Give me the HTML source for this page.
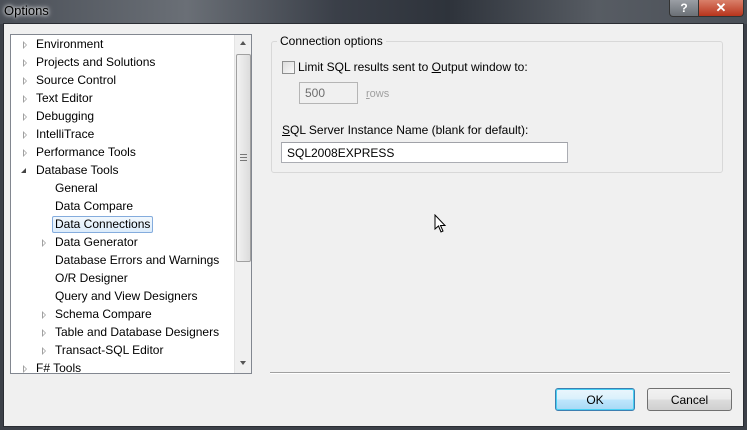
<!DOCTYPE html>
<html><head><style>
body{margin:0;width:747px;height:430px;overflow:hidden;background:#3c4048;font-family:"Liberation Sans",sans-serif;font-size:12px;color:#000;position:relative}
.title{position:absolute;left:0;top:0;width:747px;height:24px;background:linear-gradient(90deg,#4b5058 0%,#6a6f76 25%,#3a3f48 45%,#2e333b 60%,#575c63 80%,#4a4f57 100%)}
.title span{position:absolute;left:4px;top:3px;color:#000;font-size:13px;text-shadow:0 0 6px #fff,0 0 3px #fff}
.btnq{position:absolute;left:669px;top:0;width:28px;height:16px;border:1px solid #333;border-top:none;border-radius:0 0 0 4px;background:linear-gradient(#9a9ea4,#6b7076);color:#fff;font-weight:bold;text-align:center;font-size:12px;line-height:16px}
.btnx{position:absolute;left:698px;top:0;width:44px;height:16px;border:1px solid #333;border-top:none;border-radius:0 0 4px 0;background:linear-gradient(#d9806a,#b8341c);color:#fff;font-weight:bold;text-align:center;font-size:13px;line-height:16px}
.client{position:absolute;left:3px;top:23px;width:739px;height:402px;background:#f0f0f0;border:1px solid #2a2d33}
.tree{position:absolute;left:10px;top:34px;width:240px;height:338px;background:#fff;border:1px solid #828790;overflow:hidden}
.it{position:absolute;height:18px;line-height:18px;white-space:nowrap}
.ar{position:absolute;width:0;height:0;border-left:4px solid #a0a0a0;border-top:4px solid transparent;border-bottom:4px solid transparent;top:6px}
.ar:after{content:"";position:absolute;left:-3px;top:-2px;border-left:2px solid #fff;border-top:2px solid transparent;border-bottom:2px solid transparent}
.ex{position:absolute;top:6px;width:0;height:0;border-right:5px solid #444;border-top:5px solid transparent}
.sel{background:linear-gradient(#f2f8fd,#dcecfb);border:1px solid #84acdd;border-radius:2px;padding:0 2px;margin-left:-3px;line-height:15px;height:15px}
.sb{position:absolute;left:223px;top:0;width:17px;height:338px;background:#f0f0f0;border-left:1px solid #e4e4e4}
.thumb{position:absolute;left:1px;top:19px;width:13px;height:206px;border:1px solid #a0a0a0;border-radius:2px;background:linear-gradient(90deg,#f2f2f2,#dcdcdc)}
.group{position:absolute;left:271px;top:41px;width:450px;height:130px;border:1px solid #d8d8d8;border-radius:3px}
.glabel{position:absolute;left:277px;top:34px;background:#f0f0f0;padding:0 3px;font-size:12px}
.cb{position:absolute;left:282px;top:61px;width:11px;height:11px;border:1px solid #8e8f8f;background:linear-gradient(135deg,#dcdcdc,#fafafa)}
.inp{position:absolute;background:#fff;border:1px solid #abadb3;border-top-color:#a0a2a8;height:21px;line-height:21px;padding-left:5px;box-sizing:border-box}
.sep{position:absolute;left:270px;top:372px;width:460px;height:1px;background:#a0a0a0;border-bottom:1px solid #fff}
.btn{position:absolute;top:388px;height:23px;border:1px solid #707070;border-radius:3px;background:linear-gradient(#f2f2f2 0%,#ebebeb 50%,#dddddd 51%,#cfcfcf 100%);text-align:center;line-height:22px;box-sizing:border-box}
.ok{border-color:#3c7fb1;background:linear-gradient(#eaf6fd 0%,#d9f0fc 50%,#bee6fd 51%,#a7d9f5 100%);box-shadow:inset 0 0 0 1px #48d0f3}
u{text-decoration:underline}
</style></head><body>
<div class="title"><span>Options</span></div>
<div class="btnq">?</div><div class="btnx">✕</div>
<div class="client"></div>
<div class="tree">
 <div class="ar" style="left:12px;top:6px"></div><div class="it" style="left:25px;top:0">Environment</div>
 <div class="ar" style="left:12px;top:24px"></div><div class="it" style="left:25px;top:18px">Projects and Solutions</div>
 <div class="ar" style="left:12px;top:42px"></div><div class="it" style="left:25px;top:36px">Source Control</div>
 <div class="ar" style="left:12px;top:60px"></div><div class="it" style="left:25px;top:54px">Text Editor</div>
 <div class="ar" style="left:12px;top:78px"></div><div class="it" style="left:25px;top:72px">Debugging</div>
 <div class="ar" style="left:12px;top:96px"></div><div class="it" style="left:25px;top:90px">IntelliTrace</div>
 <div class="ar" style="left:12px;top:114px"></div><div class="it" style="left:25px;top:108px">Performance Tools</div>
 <div class="ex" style="left:10px;top:133px"></div><div class="it" style="left:25px;top:126px">Database Tools</div>
 <div class="it" style="left:44px;top:144px">General</div>
 <div class="it" style="left:44px;top:162px">Data Compare</div>
 <div class="it" style="left:44px;top:180px"><span class="sel" style="display:inline-block">Data Connections</span></div>
 <div class="ar" style="left:31px;top:204px"></div><div class="it" style="left:44px;top:198px">Data Generator</div>
 <div class="it" style="left:44px;top:216px">Database Errors and Warnings</div>
 <div class="it" style="left:44px;top:234px">O/R Designer</div>
 <div class="it" style="left:44px;top:252px">Query and View Designers</div>
 <div class="ar" style="left:31px;top:276px"></div><div class="it" style="left:44px;top:270px">Schema Compare</div>
 <div class="ar" style="left:31px;top:294px"></div><div class="it" style="left:44px;top:288px">Table and Database Designers</div>
 <div class="ar" style="left:31px;top:312px"></div><div class="it" style="left:44px;top:306px">Transact-SQL Editor</div>
 <div class="ar" style="left:12px;top:330px"></div><div class="it" style="left:25px;top:324px">F# Tools</div>
 <div class="sb"><div style="position:absolute;left:5px;top:6px;border-bottom:4px solid #555;border-left:3px solid transparent;border-right:3px solid transparent"></div>
 <div class="thumb"><div style="position:absolute;left:3px;top:99px;width:7px;height:5px;border-top:1px solid #777;border-bottom:1px solid #777"><div style="margin-top:2px;height:1px;background:#777"></div></div></div>
 <div style="position:absolute;left:5px;top:326px;border-top:4px solid #555;border-left:3px solid transparent;border-right:3px solid transparent"></div></div>
</div>
<div class="group"></div>
<div class="glabel">Connection options</div>
<div class="cb"></div>
<div style="position:absolute;left:298px;top:60px">Limit SQL results sent to <u>O</u>utput window to:</div>
<div class="inp" style="left:299px;top:82px;width:59px;height:22px;background:#f0f0f0;color:#6d6d6d;border-color:#b5b5b5">500</div>
<div style="position:absolute;left:366px;top:88px;color:#a0a0a0;font-size:11px"><u>r</u>ows</div>
<div style="position:absolute;left:282px;top:123px"><u>S</u>QL Server Instance Name (blank for default):</div>
<div class="inp" style="left:281px;top:142px;width:287px">SQL2008EXPRESS</div>
<svg style="position:absolute;left:434px;top:214px" width="14" height="20"><path d="M1 1 L1 15 L4.5 12 L7 18 L9 17 L6.5 11.5 L11 11.5 Z" fill="#fff" stroke="#000" stroke-width="1"/></svg>
<div class="sep"></div>
<div class="btn ok" style="left:555px;width:80px">OK</div>
<div class="btn" style="left:647px;width:85px">Cancel</div>
</body></html>
